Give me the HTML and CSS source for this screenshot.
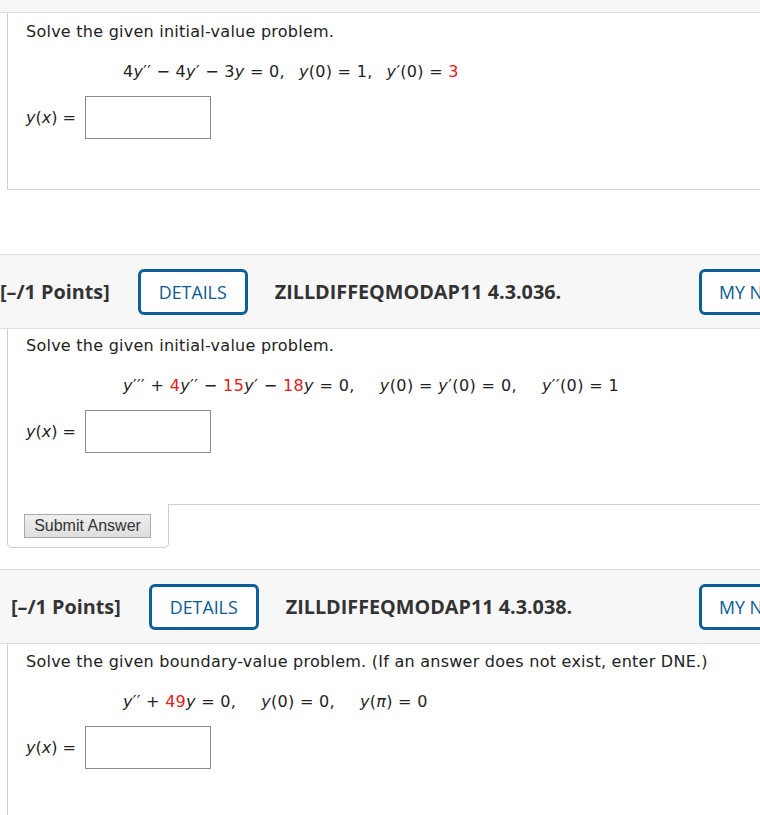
FILE: index.html
```html
<!DOCTYPE html>
<html>
<head>
<meta charset="utf-8">
<link rel="stylesheet" href="styles.css">
</head>
<body>
<div class="page">
  <div class="head-tail"></div>

  <section class="qbody q1">
    <p class="prompt">Solve the given initial-value problem.</p>
    <p class="math">4<i>y</i>′′ − 4<i>y</i>′ − 3<i>y</i> = 0,<span class="sep"></span><i>y</i>(0) = 1,<span class="sep"></span><i>y</i>′(0) = <span class="red">3</span></p>
    <div class="answer"><span class="lbl"><i>y</i>(<i>x</i>) =</span><span class="box"></span></div>
  </section>

  <header class="qhead h2">
    <span class="points">[–/1 Points]</span>
    <span class="btn">DETAILS</span>
    <span class="code">ZILLDIFFEQMODAP11 4.3.036.</span>
    <span class="btn notes">MY NOTES</span>
  </header>

  <section class="qwrap">
    <div class="qbody q2">
      <p class="prompt">Solve the given initial-value problem.</p>
      <p class="math wide"><i>y</i>′′′ + <span class="red">4</span><i>y</i>′′ − <span class="red">15</span><i>y</i>′ − <span class="red">18</span><i>y</i> = 0,<span class="sep2"></span><i>y</i>(0) = <i>y</i>′(0) = 0,<span class="sep2"></span><i>y</i>′′(0) = 1</p>
      <div class="answer"><span class="lbl"><i>y</i>(<i>x</i>) =</span><span class="box"></span></div>
    </div>
    <div class="qfoot">
      <div class="tab"><button class="submit">Submit Answer</button></div>
      <div class="rest"></div>
    </div>
  </section>

  <header class="qhead h3">
    <span class="points">[–/1 Points]</span>
    <span class="btn">DETAILS</span>
    <span class="code">ZILLDIFFEQMODAP11 4.3.038.</span>
    <span class="btn notes">MY NOTES</span>
  </header>

  <section class="qbody q3">
    <p class="prompt">Solve the given boundary-value problem. (If an answer does not exist, enter DNE.)</p>
    <p class="math"><i>y</i>′′ + <span class="red">49</span><i>y</i> = 0,<span class="sep2"></span><i>y</i>(0) = 0,<span class="sep2"></span><i>y</i>(<i>π</i>) = 0</p>
    <div class="answer"><span class="lbl"><i>y</i>(<i>x</i>) =</span><span class="box"></span></div>
  </section>
</div>
</body>
</html>
```
FILE: styles.css
```css
html, body {
  margin: 0;
  padding: 0;
  overflow: hidden;
  background: #fff;
}
.page {
  width: 830px;
  font-family: "DejaVu Sans", Verdana, sans-serif;
  font-size: 16px;
  color: #222;
}
.head-tail {
  height: 12px;
  background: #f6f6f6;
  border-bottom: 1px solid #dcdcdc;
}
.qbody {
  margin-left: 7px;
  border-left: 1px solid #cfcfcf;
  padding: 8px 0 0 18px;
}
.q1 {
  border-bottom: 1px solid #cfcfcf;
  padding-top: 9px;
  height: 167px;
  margin-bottom: 64px;
}
.prompt {
  margin: 0;
  line-height: 20px;
  letter-spacing: 0.25px;
}
.math {
  margin: 20px 0 0 97px;
  line-height: 20px;
  white-space: nowrap;
  letter-spacing: 0.3px;
}
.math.wide {
  letter-spacing: 0.4px;
}
.math i, .lbl i {
  font-style: oblique;
}
.red { color: #e0201a; }
.sep { display: inline-block; width: 14px; }
.sep2 { display: inline-block; width: 25px; }
.answer {
  display: flex;
  align-items: center;
  margin-top: 14px;
  height: 43px;
}
.lbl {
  width: 59px;
  font-size: 16px;
}
.box {
  width: 124px;
  height: 41px;
  border: 1px solid #8a8a8a;
  background: #fff;
}
.qhead {
  display: flex;
  align-items: center;
  height: 73px;
  background: #f7f7f7;
  border-top: 1px solid #dedede;
  border-bottom: 1px solid #dedede;
  font-family: "Open Sans", sans-serif;
  color: #333;
}
.h2 { padding-left: 0; }
.h3 { padding-left: 11px; }
.points {
  font-weight: 700;
  font-size: 19.8px;
  margin-right: 28px;
}
.btn {
  box-sizing: border-box;
  width: 110px;
  height: 46px;
  border: 3px solid #0b609c;
  border-radius: 6px;
  background: #fff;
  color: #0b5a92;
  font-size: 17.8px;
  display: flex;
  align-items: center;
  justify-content: center;
}
.code {
  font-weight: 700;
  font-size: 19.8px;
  margin-left: 27px;
}
.notes {
  margin-left: auto;
  width: 131px;
  justify-content: flex-start;
  padding-left: 17px;
}
.qwrap {
  margin-bottom: 21px;
}
.q2 {
  padding-top: 7px;
  height: 168px;
}
.qfoot {
  display: flex;
  margin-left: 7px;
}
.tab {
  box-sizing: border-box;
  width: 162px;
  border: 1px solid #cfcfcf;
  border-top: none;
  border-radius: 0 0 5px 5px;
  padding: 10px 0 9px 16px;
}
.rest {
  flex: 1;
  border-top: 1px solid #cfcfcf;
}
.submit {
  display: block;
  box-sizing: border-box;
  width: 127px;
  height: 24px;
  margin: 0;
  padding: 0;
  font-family: "Liberation Sans", Arial, sans-serif;
  font-size: 16px;
  color: #333;
  background: linear-gradient(#efefef, #dedede);
  border: 1px solid #a9a9a9;
  border-radius: 0;
}
.q3 {
  height: 200px;
}
```
